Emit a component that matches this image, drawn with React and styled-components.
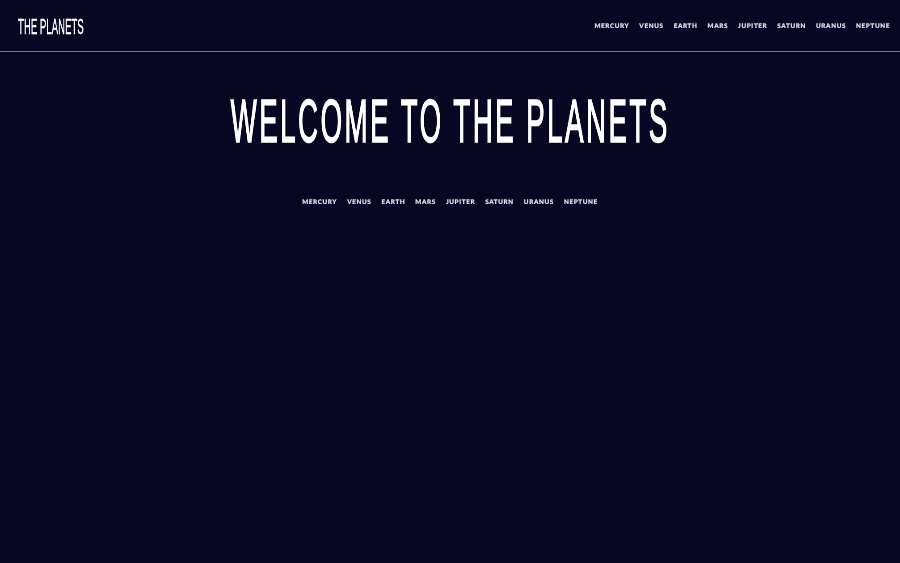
import React from "react";
import styled, { createGlobalStyle } from "styled-components";

const planets = ["Mercury", "Venus", "Earth", "Mars", "Jupiter", "Saturn", "Uranus", "Neptune"];

const GlobalStyle = createGlobalStyle`
  html, body {
    margin: 0;
    background: #070724;
    color: #fff;
  }
`;

const Page = styled.div`
  min-height: 563px;
  background: #070724;
`;

const Header = styled.header`
  height: 51px;
  border-bottom: 1px solid rgba(255, 255, 255, 0.45);
  display: flex;
  align-items: center;
  justify-content: space-between;
  padding: 0 10px 0 18px;
`;

const Logo = styled.div`
  font-family: "Liberation Sans", sans-serif;
  font-size: 22px;
  line-height: 22px;
  -webkit-text-stroke: 0.5px #fff;
  white-space: nowrap;
  transform: scaleX(0.437);
  transform-origin: left center;
  width: 66px;
  margin-top: 3px;
  will-change: transform;
`;

const PlanetNav = styled.nav`
  display: flex;
  gap: ${props => props.$gap}px;
  justify-content: center;
  margin-top: ${props => props.$top}px;
  text-rendering: geometricPrecision;
  will-change: opacity;
`;

const NavLink = styled.a`
  font-family: "Lato", sans-serif;
  font-size: 6.3px;
  line-height: 12px;
  font-weight: 900;
  letter-spacing: 0.64px;
  text-transform: uppercase;
  color: #fff;
  -webkit-text-stroke: 0.15px #fff;
  opacity: 0.9;
`;

const Hero = styled.main`
  display: flex;
  flex-direction: column;
  align-items: center;
`;

const Title = styled.h1`
  margin: 31px 0 0;
  font-family: "Liberation Sans", sans-serif;
  font-size: 62px;
  line-height: 76px;
  font-weight: 400;
  letter-spacing: 5.5px;
  -webkit-text-stroke: 1.6px #fff;
  white-space: nowrap;
  text-transform: uppercase;
  transform: scaleX(0.447);
  will-change: transform;
`;

const App = () => (
  <Page>
    <GlobalStyle />
    <Header>
      <Logo>THE PLANETS</Logo>
      <PlanetNav $gap={10} $top={3}>
        {planets.map(name => (
          <NavLink key={name}>{name}</NavLink>
        ))}
      </PlanetNav>
    </Header>
    <Hero>
      <Title>Welcome to the Planets</Title>
      <PlanetNav $gap={10} $top={38}>
        {planets.map(name => (
          <NavLink key={name}>{name}</NavLink>
        ))}
      </PlanetNav>
    </Hero>
  </Page>
);

export default App;
